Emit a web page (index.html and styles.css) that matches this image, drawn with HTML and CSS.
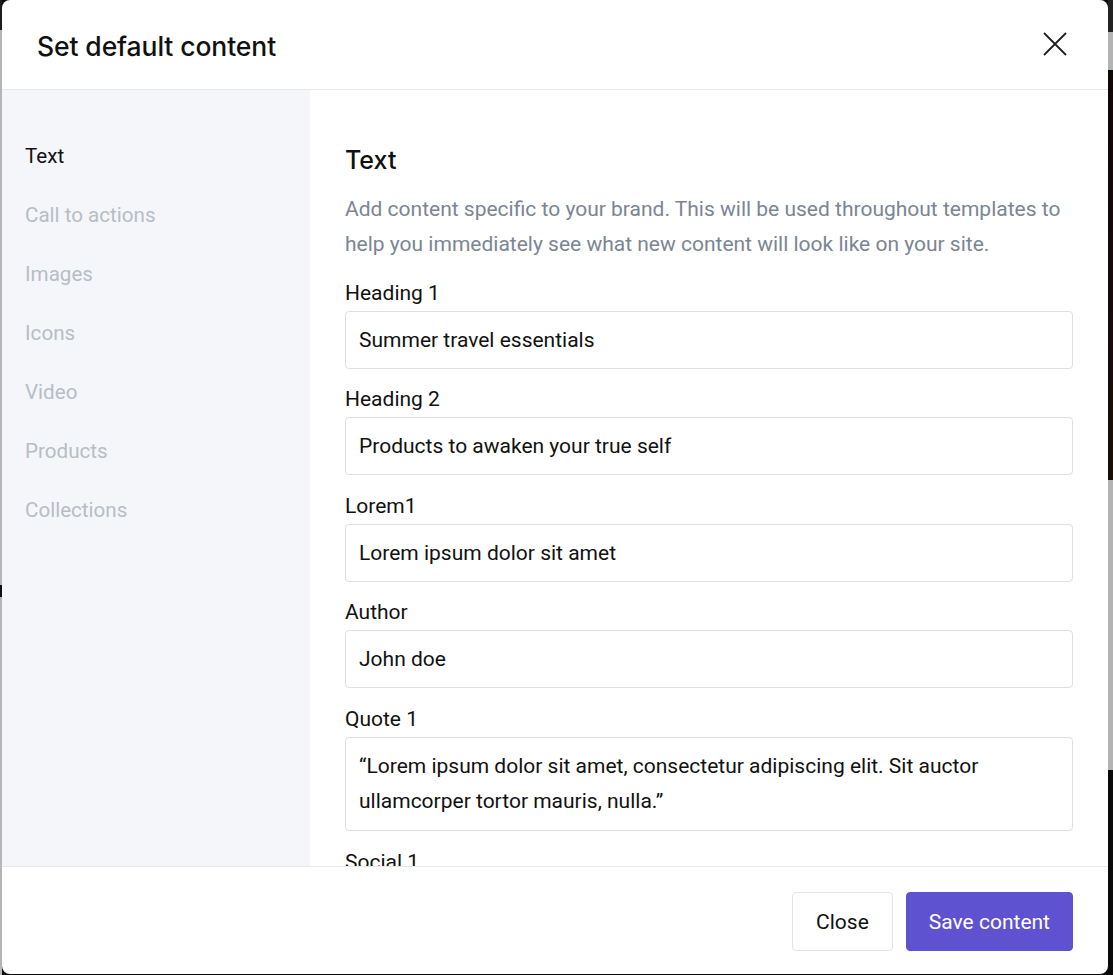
FILE: index.html
```html
<!DOCTYPE html>
<html lang="en">
<head>
<meta charset="UTF-8" />
<title>Set default content</title>
<link rel="stylesheet" href="styles.css">
</head>
<body>

<div class="modal">
  <header class="modal-head">
    <h1>Set default content</h1>
    <button class="close-x" aria-label="Close">
      <svg width="24" height="24" viewBox="0 0 24 24"><path d="M1 1 L23 23 M23 1 L1 23" stroke="#1f1f1f" stroke-width="1.8" fill="none"/></svg>
    </button>
  </header>

  <div class="modal-body">
    <nav class="side">
      <a class="active" href="#">Text</a>
      <a href="#">Call to actions</a>
      <a href="#">Images</a>
      <a href="#">Icons</a>
      <a href="#">Video</a>
      <a href="#">Products</a>
      <a href="#">Collections</a>
    </nav>

    <section class="content">
      <h2>Text</h2>
      <p class="intro">Add content specific to your brand. This will be used throughout templates to help you immediately see what new content will look like on your site.</p>

      <div class="field">
        <label>Heading 1</label>
        <div class="input">Summer travel essentials</div>
      </div>
      <div class="field">
        <label>Heading 2</label>
        <div class="input">Products to awaken your true self</div>
      </div>
      <div class="field">
        <label>Lorem1</label>
        <div class="input">Lorem ipsum dolor sit amet</div>
      </div>
      <div class="field">
        <label>Author</label>
        <div class="input">John doe</div>
      </div>
      <div class="field">
        <label>Quote 1</label>
        <div class="input multi">“Lorem ipsum dolor sit amet, consectetur adipiscing elit. Sit auctor ullamcorper tortor mauris, nulla.”</div>
      </div>
      <div class="field">
        <label>Social 1</label>
        <div class="input"></div>
      </div>
    </section>
  </div>

  <footer class="modal-foot">
    <button class="btn">Close</button>
    <button class="btn primary">Save content</button>
  </footer>
</div>

</body>
</html>
```

FILE: styles.css
```css
html, body { margin: 0; height: 975px; overflow: hidden; }
body {
  font-family: Roboto, "Noto Sans", sans-serif;
  color: #111;
  background:
    linear-gradient(to bottom, #1c1c1c 0, #1c1c1c 30px, #b5b5b5 30px, #b5b5b5 585px, #111 585px, #111 597px, #b5b5b5 597px) left top / 2px 100% no-repeat,
    linear-gradient(to bottom, #222 0, #222 32px, #b3b3b3 32px, #b3b3b3 70px, #0e0706 70px, #1a0e0c 480px, #b3b3b3 480px, #b3b3b3 770px, #0a0a0a 770px) right top / 5px 100% no-repeat,
    #0a0a0a;
}

.modal { margin-left: 2px; width: 1106px; height: 974px; background: #fff; border-radius: 8px; overflow: hidden; display: flex; flex-direction: column; }

.modal-head { height: 89px; flex: none; display: flex; align-items: center; justify-content: space-between; padding: 0 41px 0 35px; border-bottom: 1px solid #e6e8ec; }
.modal-head h1 { margin: 2px 0 0; font-family: Inter, sans-serif; font-weight: 500; font-size: 26.5px; letter-spacing: -0.1px; color: #111; }
.close-x { border: none; background: none; padding: 0; margin-top: -2px; cursor: pointer; display: flex; }

.modal-body { flex: 1; display: flex; min-height: 0; }

.side { width: 308px; flex: none; background: #f5f6fa; padding: 54px 0 0 23px; box-sizing: border-box; display: flex; flex-direction: column; }
.side a { font-size: 20.6px; line-height: 24px; height: 59px; color: #b7bdc6; text-decoration: none; }
.side a.active { color: #111; }

.content { flex: 1; padding: 55px 35px 0 35px; overflow: hidden; }
.content h2 { margin: 0; font-family: Inter, sans-serif; font-weight: 500; font-size: 25px; line-height: 30px; }
.intro { margin: 17px 0 0; font-size: 21px; line-height: 35px; color: #7b8593; }

.field { margin-top: 18.6px; }
.field label { display: block; font-size: 21px; line-height: 24px; margin-bottom: 6px; }
.input { border: 1px solid #dcdfe4; border-radius: 4px; box-sizing: border-box; height: 58px; padding: 0 13px; display: flex; align-items: center; font-size: 21px; }
.input.multi { height: 94px; padding: 11px 13px; display: block; line-height: 35px; }

.modal-foot { height: 108px; flex: none; border-top: 1px solid #e6e8ec; display: flex; align-items: center; justify-content: flex-end; gap: 13px; padding: 2px 35px 0; box-sizing: border-box; }
.btn { font-family: Roboto, sans-serif; font-size: 21px; height: 59px; padding: 0 23px; border-radius: 4px; border: 1px solid #e1e4e8; background: #fff; color: #111; cursor: pointer; }
.btn.primary { padding: 0 22px; background: #5f52d1; border-color: #5f52d1; color: #fff; }
```
